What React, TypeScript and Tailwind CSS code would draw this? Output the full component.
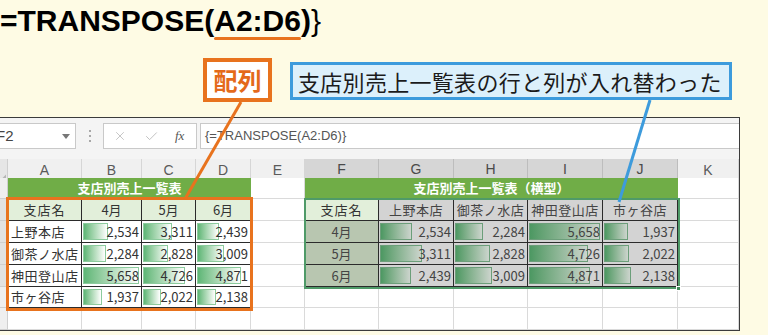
import { Check, X } from "lucide-react";

const MAX = 5658;
const jp = "font-['Noto_Sans_CJK_JP','Noto_Sans',sans-serif]";
const grid =
  "grid grid-cols-[8px_74px_60px_54px_55px_54px_74px_75px_74px_75px_75px_61px]";

// widths of A..K
const cols = [74, 60, 54, 55, 54, 74, 75, 74, 75, 75, 61];

const stores = ["上野本店", "御茶ノ水店", "神田登山店", "市ヶ谷店"];
const months = ["4月", "5月", "6月"];
const sales = [
  [2534, 3311, 2439],
  [2284, 2828, 3009],
  [5658, 4726, 4871],
  [1937, 2022, 2138],
];

const fmt = (n: number) => n.toLocaleString("en-US");

const blank = "border-r border-b border-[#dadada] bg-white";
const black = "border-r border-b border-[#2b2b2b]";

function RowHead({ sel }: { sel?: boolean }) {
  return (
    <div
      className={`border-r border-b border-[#cfcfcf] ${
        sel ? "bg-[#e2e2e2]" : "bg-[#efefef]"
      }`}
    />
  );
}

function Bar({ v, w, dim }: { v: number; w: number; dim?: boolean }) {
  const bw = Math.round(((w - 4) * v) / MAX);
  return (
    <div
      className={`relative flex items-center justify-end pr-[2px] ${black} ${
        dim ? "bg-[#d3d3d3] text-[#444]" : "bg-white text-[#333]"
      }`}
    >
      <div
        className={`absolute left-[1px] top-[2px] bottom-[2px] border ${
          dim
            ? "border-[#6c9e7a] bg-linear-to-r from-[#4c9862] to-[#ccd4cd]"
            : "border-[#8ccb9d] bg-linear-to-r from-[#5db676] to-white"
        }`}
        style={{ width: bw }}
      />
      <span className="relative">{fmt(v)}</span>
    </div>
  );
}

function FormulaBar() {
  return (
    <div className="h-[33px] flex items-start pt-[5px] bg-[#f4f4f4]">
      <div className="-ml-[20px] w-[96px] h-[26px] bg-white border border-[#c9c9c9] flex items-center justify-between pl-[15px] pr-[5px]">
        <span className="text-[15px] text-[#444] font-['Liberation_Sans',sans-serif]">
          F2
        </span>
        <svg width="8" height="5" viewBox="0 0 8 5">
          <path d="M0 0h8L4 5z" fill="#777" />
        </svg>
      </div>
      <div className="w-[27px] h-[26px] flex flex-col items-center justify-center gap-[3px]">
        <div className="w-[2px] h-[2px] bg-[#a8a8a8]" />
        <div className="w-[2px] h-[2px] bg-[#a8a8a8]" />
        <div className="w-[2px] h-[2px] bg-[#a8a8a8]" />
      </div>
      <div className="w-[94px] h-[26px] bg-white border border-[#c9c9c9] flex items-center pl-[9px]">
        <X size={14} strokeWidth={1.3} color="#b4b4b4" />
        <Check size={15} strokeWidth={1.3} color="#b4b4b4" className="ml-[17px]" />
        <span className="ml-[16px] text-[13px] italic text-[#555] font-['Liberation_Serif',serif]">
          fx
        </span>
      </div>
      <div className="ml-[3px] flex-1 h-[26px] bg-white border-t border-b border-l border-[#c9c9c9] flex items-center pl-[4px]">
        <span className="text-[13px] text-[#555] font-['Liberation_Sans',sans-serif]">
          {"{=TRANSPOSE(A2:D6)}"}
        </span>
      </div>
    </div>
  );
}

function Headers() {
  const letters = ["A", "B", "C", "D", "E", "F", "G", "H", "I", "J", "K"];
  return (
    <div className={`${grid} h-[19px] font-['Liberation_Sans',sans-serif] text-[14px]`}>
      <div className="bg-[#e6e6e6] border-r border-b border-[#cfcfcf] flex items-end justify-end p-[1px]">
        <svg width="6" height="6" viewBox="0 0 6 6">
          <path d="M6 0v6H0z" fill="#b5b5b5" />
        </svg>
      </div>
      {letters.map((l, i) => {
        const sel = i >= 5 && i <= 9;
        return (
          <div
            key={l}
            className={`flex items-center justify-center border-r ${
              sel
                ? "bg-[#d6d6d6] text-[#4a4a4a] border-[#bdbdbd] border-b-2 border-b-[#5f9a70]"
                : "bg-[#f0f0f0] text-[#5a5a5a] border-[#d6d6d6] border-b border-b-[#cfcfcf]"
            }`}
          >
            {l}
          </div>
        );
      })}
    </div>
  );
}

function Sheet() {
  return (
    <div className="w-[740px] h-[214px] border-t border-r border-b border-[#3b3b3b] bg-white flex flex-col">
      <FormulaBar />
      <div className="h-[8px] bg-[#f4f4f4]" />
      <Headers />

      {/* row 1 */}
      <div className={`${grid} h-[21px] text-[13px] font-bold text-white`}>
        <RowHead />
        <div className="col-span-4 bg-[#70ad47] border-b border-[#2b2b2b] flex items-center justify-center">
          支店別売上一覧表
        </div>
        <div className={blank} />
        <div className="col-span-5 bg-[#70ad47] border-b border-[#4f7f3a] flex items-center justify-center">
          支店別売上一覧表（横型）
        </div>
        <div className={blank} />
      </div>

      {/* row 2 */}
      <div className={`${grid} h-[22px] text-[13px] text-[#333]`}>
        <RowHead sel />
        <div className={`${black} bg-[#e2efda] flex items-center justify-center tracking-[1px]`}>
          支店名
        </div>
        {months.map((m) => (
          <div key={m} className={`${black} bg-[#e2efda] flex items-center justify-center`}>
            {m}
          </div>
        ))}
        <div className={blank} />
        <div className={`${black} bg-[#e2efda] flex items-center justify-center tracking-[1px]`}>
          支店名
        </div>
        {stores.map((s) => (
          <div
            key={s}
            className={`${black} bg-[#d3d3d3] text-[#444] flex items-center justify-center tracking-[0.5px]`}
          >
            {s}
          </div>
        ))}
        <div className={blank} />
      </div>

      {/* rows 3-6 */}
      {stores.map((s, r) => (
        <div key={s} className={`${grid} ${r === 3 ? "h-[21px]" : "h-[22px]"} text-[13px]`}>
          <RowHead sel={r < 3} />
          <div className={`${black} bg-white text-[#333] flex items-center pl-[3px] tracking-[0.5px]`}>
            {s}
          </div>
          {sales[r].map((v, c) => (
            <Bar key={c} v={v} w={cols[c + 1]} />
          ))}
          <div className={blank} />
          {r < 3 ? (
            <>
              <div className={`${black} bg-[#b8c6b0] text-[#444] flex items-center justify-center`}>
                {months[r]}
              </div>
              {stores.map((_, c) => (
                <Bar key={c} v={sales[c][r]} w={cols[c + 6]} dim />
              ))}
            </>
          ) : (
            [0, 1, 2, 3, 4].map((c) => <div key={c} className={blank} />)
          )}
          <div className={blank} />
        </div>
      ))}

      {/* row 7 */}
      <div className={`${grid} h-[22px]`}>
        <RowHead />
        {cols.map((_, c) => (
          <div key={c} className={blank} />
        ))}
      </div>
    </div>
  );
}

export default function App() {
  return (
    <div className={`relative w-[768px] h-[335px] overflow-hidden bg-[#fefbe4] ${jp}`}>
      <div className="h-[45px] pt-[6px] leading-[30px] whitespace-nowrap font-['Liberation_Sans',sans-serif] text-[30px] text-black">
        <span className="font-bold">
          =TRANSPOSE(
          <span className="relative">
            A2:D6
            <span className="absolute left-0 right-0 -bottom-[3px] h-[3px] rounded-full bg-[#e8731e]" />
          </span>
          )
        </span>
        <span className="font-normal">{"}"}</span>
      </div>

      <div className="h-[72px] flex items-start">
        <div className="ml-[203px] mt-[13px] w-[69px] h-[44px] border-[4px] border-[#e8731e] bg-white flex items-center justify-center text-[24px] font-bold text-[#e4691a] leading-none">
          配列
        </div>
        <div className="ml-[18px] mt-[17px] w-[442px] h-[38px] border-[3px] border-[#3d9bdc] bg-[#dcf0fb] flex items-center pl-[5px] text-[22px] text-[#1b1b1b] leading-none tracking-[0.3px] whitespace-nowrap">
          支店別売上一覧表の行と列が入れ替わった
        </div>
      </div>

      <Sheet />

      {/* overlays: range outlines and leader lines */}
      <div className="absolute left-[6px] top-[197px] w-[247px] h-[114px] border-[3px] border-[#e8731e] pointer-events-none" />
      <div className="absolute left-[304px] top-[198px] w-[376px] h-[91px] border-2 border-[#4f9a68] pointer-events-none" />
      <div className="absolute left-[676px] top-[286px] w-[5px] h-[5px] bg-[#3f8a58] border border-white" />
      <svg className="absolute left-0 top-0 pointer-events-none" width="768" height="335">
        <line x1="241" y1="102" x2="185" y2="199" stroke="#e8731e" strokeWidth="3" />
        <line x1="650" y1="100" x2="619" y2="202" stroke="#3d9bdc" strokeWidth="3" />
      </svg>
    </div>
  );
}
